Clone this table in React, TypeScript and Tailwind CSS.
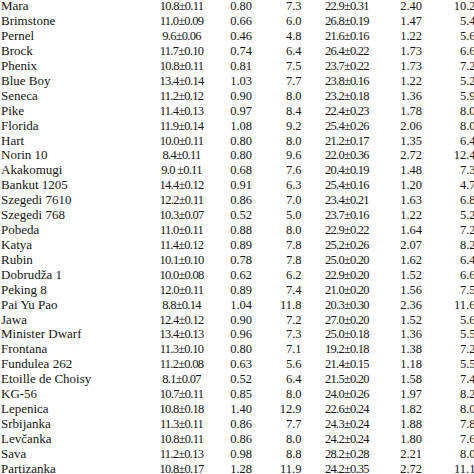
import React from "react";

const rows: string[][] = [
  ["Mara", "10.8±0.11", "0.80", "7.3", "22.9±0.31", "2.40", "10.2"],
  ["Brimstone", "11.0±0.09", "0.66", "6.0", "26.8±0.19", "1.47", "5.4"],
  ["Pernel", "9.6±0.06", "0.46", "4.8", "21.6±0.16", "1.22", "5.6"],
  ["Brock", "11.7±0.10", "0.74", "6.4", "26.4±0.22", "1.73", "6.6"],
  ["Phenix", "10.8±0.11", "0.81", "7.5", "23.7±0.22", "1.73", "7.2"],
  ["Blue Boy", "13.4±0.14", "1.03", "7.7", "23.8±0.16", "1.22", "5.2"],
  ["Seneca", "11.2±0.12", "0.90", "8.0", "23.2±0.18", "1.36", "5.9"],
  ["Pike", "11.4±0.13", "0.97", "8.4", "22.4±0.23", "1.78", "8.0"],
  ["Florida", "11.9±0.14", "1.08", "9.2", "25.4±0.26", "2.06", "8.0"],
  ["Hart", "10.0±0.11", "0.80", "8.0", "21.2±0.17", "1.35", "6.4"],
  ["Norin 10", "8.4±0.11", "0.80", "9.6", "22.0±0.36", "2.72", "12.4"],
  ["Akakomugi", "9.0 ±0.11", "0.68", "7.6", "20.4±0.19", "1.48", "7.3"],
  ["Bankut 1205", "14.4±0.12", "0.91", "6.3", "25.4±0.16", "1.20", "4.7"],
  ["Szegedi 7610", "12.2±0.11", "0.86", "7.0", "23.4±0.21", "1.63", "6.8"],
  ["Szegedi 768", "10.3±0.07", "0.52", "5.0", "23.7±0.16", "1.22", "5.2"],
  ["Pobeda", "11.0±0.11", "0.88", "8.0", "22.9±0.22", "1.64", "7.2"],
  ["Katya", "11.4±0.12", "0.89", "7.8", "25.2±0.26", "2.07", "8.2"],
  ["Rubin", "10.1±0.10", "0.78", "7.8", "25.0±0.20", "1.62", "6.4"],
  ["Dobrudža 1", "10.0±0.08", "0.62", "6.2", "22.9±0.20", "1.52", "6.6"],
  ["Peking 8", "12.0±0.11", "0.89", "7.4", "21.0±0.20", "1.56", "7.5"],
  ["Pai Yu Pao", "8.8±0.14", "1.04", "11.8", "20.3±0.30", "2.36", "11.6"],
  ["Jawa", "12.4±0.12", "0.90", "7.2", "27.0±0.20", "1.52", "5.6"],
  ["Minister Dwarf", "13.4±0.13", "0.96", "7.3", "25.0±0.18", "1.36", "5.5"],
  ["Frontana", "11.3±0.10", "0.80", "7.1", "19.2±0.18", "1.38", "7.2"],
  ["Fundulea 262", "11.2±0.08", "0.63", "5.6", "21.4±0.15", "1.18", "5.5"],
  ["Etoille de Choisy", "8.1±0.07", "0.52", "6.4", "21.5±0.20", "1.58", "7.4"],
  ["KG-56", "10.7±0.11", "0.85", "8.0", "24.0±0.26", "1.97", "8.2"],
  ["Lepenica", "10.8±0.18", "1.40", "12.9", "22.6±0.24", "1.82", "8.0"],
  ["Srbijanka", "11.3±0.11", "0.86", "7.7", "24.3±0.24", "1.88", "7.8"],
  ["Levčanka", "10.8±0.11", "0.86", "8.0", "24.2±0.24", "1.80", "7.6"],
  ["Sava", "11.2±0.13", "0.98", "8.8", "28.2±0.28", "2.21", "8.0"],
  ["Partizanka", "10.8±0.17", "1.28", "11.9", "24.2±0.35", "2.72", "11.1"],
];

export default function App() {
  return (
    <div
      className="w-[474px] h-[474px] overflow-hidden bg-white text-[#151515]"
      style={{ fontFamily: '"Liberation Serif", "Times New Roman", serif' }}
    >
      <div className="flex flex-col -mt-[0.8px]">
        {rows.map((r) => (
          <div key={r[0]} className="flex h-[14.93px] leading-[14.93px] whitespace-nowrap shrink-0">
            <div className="w-[150px] shrink-0 pl-[1px] text-[13px]">{r[0]}</div>
            <div className="w-[63px] shrink-0 text-center text-[12.5px] tracking-[-0.75px]">{r[1]}</div>
            <div className="w-[39px] shrink-0 text-right text-[12.5px]">{r[2]}</div>
            <div className="w-[49.5px] shrink-0 text-right text-[12.5px]">{r[3]}</div>
            <div className="w-[80px] shrink-0 pl-[23.5px] text-left text-[12.5px] tracking-[-0.75px]">{r[4]}</div>
            <div className="w-[40.5px] shrink-0 text-right text-[12.5px]">{r[5]}</div>
            <div className="w-[53.5px] shrink-0 text-right text-[12.5px]">{r[6]}</div>
          </div>
        ))}
      </div>
    </div>
  );
}
